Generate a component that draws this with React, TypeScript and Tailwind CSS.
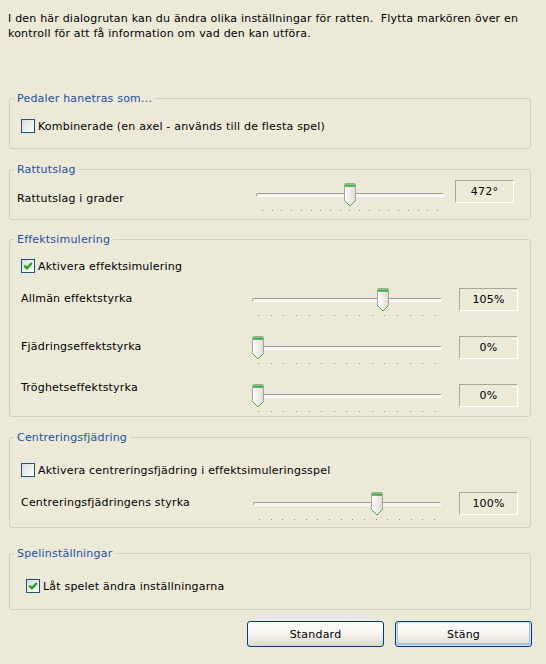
import type { ReactNode } from "react";

// --- kontroller i XP-stil ---

function GroupBox({ title, className = "", children }: { title: string; className?: string; children: ReactNode }) {
  return (
    <fieldset className={`rounded-[3px] border border-[#d0d0bf] ${className}`}>
      <legend className="ml-[4px] px-[3px] text-[#1a4fa6]">{title}</legend>
      {children}
    </fieldset>
  );
}

function CheckBox({ checked, label, className = "" }: { checked?: boolean; label: string; className?: string }) {
  return (
    <div className={`flex h-[16px] items-center gap-[3px] ${className}`}>
      <span className="flex h-[14px] w-[14px] items-center justify-center border border-[#1c5180] bg-gradient-to-br from-[#dcdcd5] to-white">
        {checked && (
          <svg width="10" height="10" viewBox="0 0 10 10">
            <path d="M1.3 4.6L3.9 7.3L8.8 1.9" stroke="#21a121" strokeWidth="2.3" fill="none" />
          </svg>
        )}
      </span>
      <span>{label}</span>
    </div>
  );
}

function Thumb({ left }: { left: number }) {
  return (
    <svg className="absolute top-0" style={{ left }} width="12" height="24" viewBox="0 0 12 24">
      <defs>
        <linearGradient id="thumbFill" x1="0" x2="1" y1="0" y2="0">
          <stop offset="0" stopColor="#ffffff" />
          <stop offset="1" stopColor="#dedcd3" />
        </linearGradient>
      </defs>
      <path
        d="M1.5 0.5H10.5Q11.5 0.5 11.5 1.5V17.5L6 23L0.5 17.5V1.5Q0.5 0.5 1.5 0.5Z"
        fill="url(#thumbFill)"
        stroke="#a3a39a"
      />
      <path d="M0.5 17.5L6 23L11.5 17.5" fill="none" stroke="#50a050" />
      <rect x="1" y="1" width="10" height="1.2" fill="#6fd26f" />
      <rect x="1" y="2.2" width="10" height="1.5" fill="#21a121" />
    </svg>
  );
}

function Slider({ className, pos, ticks }: { className: string; pos: number; ticks: number }) {
  return (
    <div className={`relative flex h-[28px] flex-col ${className}`}>
      <div className="mt-[10px] h-[4px] rounded-[2px] border border-b-white border-l-[#9d9c99] border-r-white border-t-[#9d9c99] bg-[#f6f5f0]" />
      <div className="mt-[13px] flex justify-between px-[6px]">
        {Array.from({ length: ticks }).map((_, i) => (
          <span key={i} className="h-px w-px bg-[#8e8e84]" />
        ))}
      </div>
      <Thumb left={pos} />
    </div>
  );
}

function ValueBox({ value }: { value: string }) {
  return (
    <div className="flex h-[23px] w-[59px] items-center justify-center border border-b-white border-l-[#aca899] border-r-white border-t-[#aca899]">
      {value}
    </div>
  );
}

function XpButton({ label, isDefault }: { label: string; isDefault?: boolean }) {
  return (
    <button
      className={`h-[26px] w-[137px] rounded-[3px] border border-[#003c74] bg-gradient-to-b from-white via-[#f4f3ee] to-[#dcd8cc] ${
        isDefault ? "shadow-[inset_0_0_0_1px_#cfe3fc,inset_0_-1px_0_2px_#a6bff0]" : ""
      }`}
    >
      {label}
    </button>
  );
}

export default function App() {
  return (
    <div className="h-[664px] w-[546px] bg-[#ece9d8] font-['DejaVu_Sans',Verdana,sans-serif] text-[11px] leading-[15px] tracking-[0.2px] text-black">
      {/* --- INTRO --- */}
      <p className="px-[8px] pt-[11px]">
        I den här dialogrutan kan du ändra olika inställningar för ratten.{"\u00a0 "}Flytta markören över en
        <br />
        kontroll för att få information om vad den kan utföra.
      </p>

      <div className="mt-[50px] pl-[9px] pr-[15px]">
        {/* Pedaler */}
        <GroupBox title="Pedaler hanetras som...">
          <CheckBox className="mt-[12px] mb-[14px] pl-[11px]" label="Kombinerade (en axel - används till de flesta spel)" />
        </GroupBox>

        {/* Rattutslag */}
        <GroupBox title="Rattutslag" className="mt-[13px]">
          <div className="mt-[3px] mb-[8px] flex items-start pl-[7px] pr-[16px]">
            <div className="mt-[11px] flex-1">Rattutslag i grader</div>
            <Slider className="mt-[3px] w-[188px]" pos={88} ticks={19} />
            <div className="ml-[11px]">
              <ValueBox value="472°" />
            </div>
          </div>
        </GroupBox>

        {/* Effektsimulering */}
        <GroupBox title="Effektsimulering" className="mt-[12px]">
          <CheckBox checked className="mt-[11px] pl-[11px]" label="Aktivera effektsimulering" />
          <div className="mt-[14px] flex items-start pl-[11px] pr-[12px]">
            <div className="mt-[3px] flex-1">Allmän effektstyrka</div>
            <Slider className="w-[190px]" pos={125} ticks={15} />
            <div className="ml-[17px]">
              <ValueBox value="105%" />
            </div>
          </div>
          <div className="mt-[20px] flex items-start pl-[11px] pr-[12px]">
            <div className="mt-[3px] flex-1">Fjädringseffektstyrka</div>
            <Slider className="w-[190px]" pos={0} ticks={15} />
            <div className="ml-[17px]">
              <ValueBox value="0%" />
            </div>
          </div>
          <div className="mt-[20px] mb-[4px] flex items-start pl-[11px] pr-[12px]">
            <div className="-mt-[4px] flex-1">Tröghetseffektstyrka</div>
            <Slider className="w-[190px]" pos={0} ticks={15} />
            <div className="ml-[17px]">
              <ValueBox value="0%" />
            </div>
          </div>
        </GroupBox>

        {/* Centreringsfjädring */}
        <GroupBox title="Centreringsfjädring" className="mt-[13px]">
          <CheckBox className="mt-[17px] pl-[11px]" label="Aktivera centreringsfjädring i effektsimuleringsspel" />
          <div className="mt-[14px] mb-[7px] flex items-start pl-[11px] pr-[12px]">
            <div className="mt-[3px] flex-1">Centreringsfjädringens styrka</div>
            <Slider className="w-[188px]" pos={118} ticks={16} />
            <div className="ml-[18px]">
              <ValueBox value="100%" />
            </div>
          </div>
        </GroupBox>

        {/* Spelinställningar */}
        <GroupBox title="Spelinställningar" className="mt-[18px]">
          <CheckBox checked className="mt-[17px] mb-[15px] pl-[16px]" label="Låt spelet ändra inställningarna" />
        </GroupBox>
      </div>

      {/* --- KNAPPAR --- */}
      <div className="mt-[11px] flex justify-end gap-[11px] pr-[14px]">
        <XpButton label="Standard" />
        <XpButton label="Stäng" isDefault />
      </div>
    </div>
  );
}
